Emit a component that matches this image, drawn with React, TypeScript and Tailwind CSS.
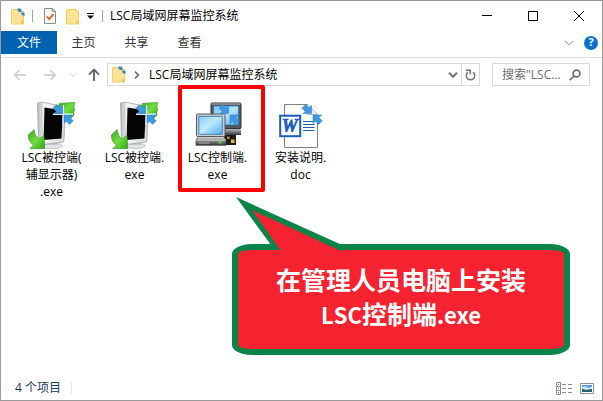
import React from "react";

type FileKind = "client" | "console" | "doc";

interface FileEntry {
  kind: FileKind;
  lines: string[];
  highlighted?: boolean;
}

const files: FileEntry[] = [
  { kind: "client", lines: ["LSC被控端(", "辅显示器)", ".exe"] },
  { kind: "client", lines: ["LSC被控端.", "exe"] },
  { kind: "console", lines: ["LSC控制端.", "exe"], highlighted: true },
  { kind: "doc", lines: ["安装说明.", "doc"] },
];

const tabs = ["主页", "共享", "查看"];

function FolderIcon({ badge = false }: { badge?: boolean }) {
  return (
    <svg width="14" height="17" viewBox="0 0 14 17" className="shrink-0">
      <path d="M.5 1.5h10v2h2v12.5H.5z" fill="#ffe394" stroke="#f2ce6b" />
      <path d="M10 12.5h3v3.5h-3z" fill="#f0c75c" />
      {badge && (
        <>
          <path d="M6.5.5h3.2l1 3.5H8.2L6.5 2.6z" fill="#2f86d6" />
          <path d="M10.5 4.5h2.6l.9 3h-2.4l-1.6-1.4z" fill="#2f86d6" />
        </>
      )}
    </svg>
  );
}

function Chevron({ className }: { className: string }) {
  return (
    <svg width="10" height="6" viewBox="0 0 10 6" fill="none" stroke="currentColor" className={className}>
      <path d="M1 .8l4 4 4-4" />
    </svg>
  );
}

function NavArrow({ className }: { className: string }) {
  return (
    <svg width="14" height="12" viewBox="0 0 14 12" fill="none" stroke="currentColor" strokeWidth="1.8" className={className}>
      <path d="M13 6H2M6.5 1.2L1.7 6l4.8 4.8" />
    </svg>
  );
}

/* The pair of blue arrows that marks a compressed file */
function CompressedMark() {
  return (
    <g fill="#3f98e2" stroke="#2a7bc6" strokeWidth=".5">
      <path d="M34.6 12.6V4.2l-2.8 2.6L28.6 3.6 25 7.2l3.2 3.2-2.4 2.2z" />
      <path d="M36 14h8.6L42 16.6l3.2 3.2-3.6 3.6-3.2-3.2-2.4 2.4z" />
    </g>
  );
}

function ClientIcon() {
  return (
    <svg width="48" height="48" viewBox="0 0 48 48">
      <defs>
        <linearGradient id="frame" x1="0" y1="0" x2="1" y2="0">
          <stop offset="0" stopColor="#b4b6b7" />
          <stop offset=".25" stopColor="#f7f7f7" />
          <stop offset="1" stopColor="#d4d6d7" />
        </linearGradient>
        <linearGradient id="green" x1="0" y1="0" x2="1" y2="1">
          <stop offset="0" stopColor="#34a51c" />
          <stop offset=".5" stopColor="#6fe03c" />
          <stop offset="1" stopColor="#2fa519" />
        </linearGradient>
      </defs>
      <ellipse cx="24" cy="44.8" rx="10.5" ry="2.8" fill="#e2e4e5" stroke="#aaadae" strokeWidth=".6" />
      <path d="M20 39h9l1 5H18z" fill="#c5c8ca" />
      <path d="M9.5 2l4-1 23 4.6c.6.2.9.6.9 1.2L35.9 40c0 .8-.5 1.1-1.2 1.2L14 43.5l-3.5-3z" fill="url(#frame)" stroke="#9a9d9e" strokeWidth=".7" />
      <path d="M13.3 2.2l.9 40.5" stroke="#c2c4c5" strokeWidth=".7" />
      <path d="M16.5 6.4L35 9.6l-1.6 28L15.6 39z" fill="#050505" />
      <path d="M31.5 2.4l15-1-.6 5 .8 2.6-1.2 2 .6 3-3.9 3.8-4-3-5.8-5.8-3.4-.4z" fill="url(#green)" stroke="#2a8d15" strokeWidth=".6" />
      <path d="M.4 34l5.8-5.4c.2 4 1.800 7.400 4.800 9.600l5-4 .7 13.300L1.800 47.700l3.700-3.600C1.700 41.400.2 38.200.4 34z" fill="url(#green)" stroke="#2a8d15" strokeWidth=".6" />
      <path d="M25 13.300h20M35.300 4v20" stroke="#f4fafd" strokeWidth="1.600" fill="none" />
      <CompressedMark />
    </svg>
  );
}

function ConsoleIcon() {
  return (
    <svg width="48" height="48" viewBox="0 0 48 48">
      <defs>
        <linearGradient id="screen" x1="0" y1="0" x2="1" y2="1">
          <stop offset="0" stopColor="#6fc4fa" />
          <stop offset=".5" stopColor="#b5e4ff" />
          <stop offset="1" stopColor="#4eb0f2" />
        </linearGradient>
        <linearGradient id="metal" x1="0" y1="0" x2="0" y2="1">
          <stop offset="0" stopColor="#e6e6e3" />
          <stop offset=".5" stopColor="#8b8d8c" />
          <stop offset="1" stopColor="#343737" />
        </linearGradient>
      </defs>
      <path d="M30 32h12v12H30z" fill="#1c1c18" />
      <path d="M33 35.500h2.500V38H33z" fill="#c98a1a" />
      <path d="M37 38.500h3.500V42H37z" fill="#f6b62b" />
      <path d="M26 26h18.500l2.500 3v5H29z" fill="url(#metal)" />
      <rect x="17" y="2" width="30" height="25.500" rx="1" fill="#54585a" stroke="#2e3132" />
      <path d="M17.500 3h29" stroke="#b7bab9" />
      <path d="M19.500 5h25v19h-25z" fill="url(#screen)" stroke="#25699b" strokeWidth=".6" />
      <path d="M5 35h24l3 3.500v5.800H2V39z" fill="url(#metal)" stroke="#393c3c" strokeWidth=".7" />
      <path d="M2.500 39.300h29" stroke="#d7d8d4" strokeWidth=".8" />
      <path d="M4.500 42h11" stroke="#adb0ad" />
      <path d="M24.500 40.800h3v1.600h-3z" fill="#58e82c" />
      <rect x="2.500" y="13" width="28.500" height="22.500" rx="1.300" fill="#cfd0cc" stroke="#565a5a" />
      <path d="M4.800 15.300h23.500v18H4.800z" fill="url(#screen)" stroke="#2172ad" strokeWidth=".8" />
      <path d="M5.500 16H25L8 32.500H5.500z" fill="#fff" opacity=".2" />
      <CompressedMark />
    </svg>
  );
}

function DocIcon() {
  return (
    <svg width="48" height="48" viewBox="0 0 48 48">
      <path d="M7.500 3.500h23l10 10v33h-33z" fill="#fff" stroke="#7f7f7f" />
      <path d="M30.500 3.500v10h10" fill="#f0f0f0" stroke="#b5b5b5" />
      <path d="M26 20.500h11.500M26 23.500h11.500M26 26.500h11.500M26 29.500h11.500" stroke="#1d5cb5" />
      <rect x="3.200" y="14.700" width="20" height="20.500" fill="#fff" stroke="#1b5dbe" strokeWidth="2" />
      <text x="12.800" y="31" textAnchor="middle" fill="#1b5dbe" stroke="#1b5dbe" strokeWidth=".7" fontSize="18" fontWeight="700" fontStyle="italic" fontFamily="Liberation Serif, serif">
        W
      </text>
      <CompressedMark />
    </svg>
  );
}

function FileTile({ file }: { file: FileEntry }) {
  return (
    <li className="relative w-[83px]">
      <button className="flex w-full flex-col items-center">
        {file.kind === "client" && <ClientIcon />}
        {file.kind === "console" && <ConsoleIcon />}
        {file.kind === "doc" && <DocIcon />}
        <span className="flex flex-col leading-[17px]">
          {file.lines.map((line) => (
            <span key={line}>{line}</span>
          ))}
        </span>
      </button>
      {file.highlighted && (
        <div className="pointer-events-none absolute -top-4 left-0.5 h-[107px] w-[87px] rounded-xs border-4 border-[#fe0000]" />
      )}
    </li>
  );
}

function TitleBar() {
  return (
    <header className="flex h-[30px] items-center pl-2.5">
      <FolderIcon badge />
      <div className="ml-[7px] h-3 w-px bg-gray-400" />
      <button aria-label="属性" className="ml-[11px]">
        <svg width="12" height="16" viewBox="0 0 12 16" fill="none">
          <path d="M.5.500h8l3 3v12H.5z" fill="#f8f8f8" stroke="#8c8c8c" />
          <path d="M8.500.500v3h3" stroke="#8c8c8c" />
          <path d="M2.800 8.500l2.400 2.700 4.300-5" stroke="#e8602c" strokeWidth="1.800" />
        </svg>
      </button>
      <button aria-label="新建文件夹" className="ml-2.5">
        <FolderIcon />
      </button>
      <button aria-label="自定义快速访问工具栏" className="ml-[7px]">
        <svg width="7" height="6" viewBox="0 0 7 6">
          <path d="M0 0h7v1H0zM0 2.500h7L3.500 6z" fill="#111" />
        </svg>
      </button>
      <div className="ml-2 h-3 w-px bg-gray-400" />
      <h1 className="ml-[7px] flex-1 truncate">LSC局域网屏幕监控系统</h1>
      <button aria-label="最小化" className="flex h-full w-[46px] items-center justify-center">
        <svg width="10" height="10" viewBox="0 0 10 10" stroke="#000" shapeRendering="crispEdges">
          <path d="M0 4.500h10" />
        </svg>
      </button>
      <button aria-label="最大化" className="flex h-full w-[46px] items-center justify-center">
        <svg width="10" height="10" viewBox="0 0 10 10" fill="none" stroke="#000">
          <path d="M.5.500h9v9h-9z" />
        </svg>
      </button>
      <button aria-label="关闭" className="flex h-full w-[46px] items-center justify-center">
        <svg width="10" height="10" viewBox="0 0 10 10" stroke="#000">
          <path d="M0 0l10 10M10 0L0 10" />
        </svg>
      </button>
    </header>
  );
}

function Ribbon() {
  return (
    <nav className="flex h-[27px] items-start border-b border-[#dadbdc] pb-[3px] text-[#333]">
      <button className="h-full w-14 bg-[#0063b1] text-white">文件</button>
      {tabs.map((tab) => (
        <button key={tab} className="h-full w-[53px]">
          {tab}
        </button>
      ))}
      <div className="ml-auto flex h-full items-center gap-2.5 pr-1">
        <button aria-label="展开功能区">
          <Chevron className="text-[#8c8c8c]" />
        </button>
        <button aria-label="帮助" className="flex size-3.5 items-center justify-center rounded-full bg-[#0b72cd] text-[11px] font-bold text-white">
          ?
        </button>
      </div>
    </nav>
  );
}

function AddressRow() {
  return (
    <div className="flex items-center px-3 py-[5px]">
      <button aria-label="后退">
        <NavArrow className="text-[#d2d2d2]" />
      </button>
      <button aria-label="前进" className="ml-4">
        <NavArrow className="rotate-180 text-[#d2d2d2]" />
      </button>
      <button aria-label="最近浏览的位置" className="ml-3">
        <Chevron className="w-2 text-[#c4c4c4]" />
      </button>
      <button aria-label="上移" className="ml-[11px]">
        <svg width="12" height="13" viewBox="0 0 12 13" fill="none" stroke="#666" strokeWidth="1.900">
          <path d="M6 13V2M1 6.700l5-5 5 5" />
        </svg>
      </button>
      <div className="ml-[7px] flex h-[23px] flex-1 items-center border border-[#d9d9d9] pl-1">
        <FolderIcon badge />
        <svg width="6" height="8" viewBox="0 0 6 8" fill="none" stroke="#6b6b6b" strokeWidth="1.600" className="ml-2">
          <path d="M1 .6L4.400 4 1 7.400" />
        </svg>
        <span className="ml-[9px] flex-1 truncate">LSC局域网屏幕监控系统</span>
        <button aria-label="以前的位置" className="mr-[3px]">
          <Chevron className="stroke-2 text-[#737373]" />
        </button>
        <button aria-label="刷新" className="flex h-full w-[18px] items-center justify-center border-l border-[#d9d9d9]">
          <svg width="11" height="12" viewBox="0 0 11 12" fill="none" stroke="#737373" strokeWidth="1.500">
            <path d="M8 3.200A4.200 4.200 0 1 1 3 3.200" />
            <path d="M1 1.200h4.200V5.500" />
          </svg>
        </button>
      </div>
      <label className="ml-3 flex h-[23px] w-[98px] items-center border border-[#d9d9d9] pr-2 pl-[9px]">
        <input
          type="text"
          aria-label="搜索"
          placeholder={'搜索"LSC...'}
          className="w-0 flex-1 outline-none placeholder:text-[#6d6d6d]"
        />
        <svg width="12" height="12" viewBox="0 0 12 12" fill="none" stroke="#707070" strokeWidth="1.700">
          <circle cx="7.500" cy="4.500" r="3.400" />
          <path d="M5 7L.8 11.200" />
        </svg>
      </label>
    </div>
  );
}

function Callout() {
  return (
    <div className="absolute top-[153px] left-[231px] w-[338px]">
      <p className="rounded-[20px/10px] border-6 border-[#0a8449] bg-[#f5222f] pt-3 pb-[18px] text-center text-[25px] leading-[34px] font-bold text-white [font-family:'Noto_Sans_CJK_SC',sans-serif]">
        在管理人员电脑上安装
        <br />
        <span className="text-[22px]">LSC</span>控制端<span className="text-[22px]">.exe</span>
      </p>
      <svg width="112" height="54" viewBox="0 0 112 54" className="absolute bottom-[104px] left-1">
        <path d="M0 0l106 48v6H45l-10-6z" fill="#0a8449" />
        <path d="M16 13l89 41H45z" fill="#f5222f" />
      </svg>
    </div>
  );
}

function StatusBar() {
  return (
    <footer className="flex h-6 items-center pr-2 pl-3.5 text-[#1e395b]">
      <span>4 个项目</span>
      <div className="ml-2.5 h-3 w-px bg-gray-200" />
      <div className="ml-auto flex items-center gap-2">
        <button aria-label="详细信息">
          <svg width="16" height="13" viewBox="0 0 16 13" fill="none" stroke="#8c8c8c">
            <path d="M.5.500h4v12h-4zM.5 4.500h4M.5 8.500h4M6 2.500h4M12 2.500h4M6 6.500h4M12 6.500h4M6 10.500h4M12 10.500h4" />
            <path d="M2 2.500h1" stroke="#39648c" />
            <path d="M2 6.500h1" stroke="#3c76ba" />
            <path d="M2 10.500h1" stroke="#d51e2f" />
          </svg>
        </button>
        <button aria-label="大图标">
          <svg width="14" height="11" viewBox="0 0 14 11">
            <path d="M.5.500h13v10H.5z" fill="#fff" stroke="#8f8f8f" />
            <path d="M2 2h10v7H2z" fill="#519de0" />
            <path d="M2 4.500c3-2 4-.5 5.500 0S10 5 12 3.500V6L7 7 2 6z" fill="#d8edf7" />
            <path d="M2 5.500L5.500 7 12 6v3H2z" fill="#276273" />
          </svg>
        </button>
      </div>
    </footer>
  );
}

export default function App() {
  return (
    <div className="flex min-h-screen flex-col border border-[#999] bg-white font-['Open_Sans','Noto_Sans_CJK_SC',sans-serif] text-xs text-black">
      <TitleBar />
      <Ribbon />
      <AddressRow />
      <main className="relative flex-1">
        <ul className="flex flex-wrap px-[9px] pt-2.5">
          {files.map((file) => (
            <FileTile key={file.lines.join("")} file={file} />
          ))}
        </ul>
        <Callout />
      </main>
      <StatusBar />
    </div>
  );
}
